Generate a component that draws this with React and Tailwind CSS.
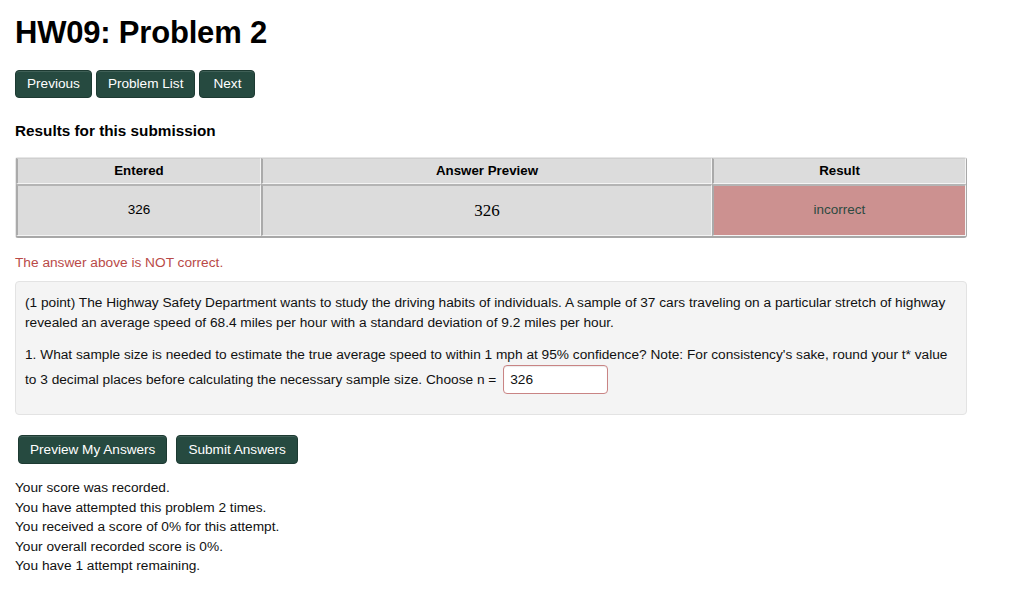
const btn =
  'h-[28px] px-[11px] rounded-[4px] bg-[#264a40] border border-[#1d3a32] text-white text-[13.6px] leading-none shadow-[inset_0_1px_0_rgba(255,255,255,0.12)]';

const cellHead =
  'border-t border-l-2 border-r border-b border-t-[#cfcfcf] border-l-[#aaaaaa] border-r-[#f4f4f4] border-b-[#f4f4f4] bg-[#dcdcdc] text-center font-bold text-[13.3px] h-[26px]';
const cellBody =
  'border-t-2 border-l-2 border-r border-b border-t-[#b4b4b4] border-l-[#aaaaaa] border-r-[#f4f4f4] border-b-[#f4f4f4] bg-[#dcdcdc] text-center text-[13.5px] h-[52px]';

export default function App() {
  return (
    <div className="min-h-[602px] bg-white text-black font-['Liberation_Sans',Arial,sans-serif] pl-[15px] pr-[57px] pt-[14px]">
      <h1 className="text-[31px] leading-[38px] font-bold tracking-[-0.2px]">HW09: Problem 2</h1>

      <div className="flex gap-[4px] mt-[18px]">
        <button className={btn}>Previous</button>
        <button className={btn}>Problem List</button>
        <button className={btn + ' px-[13px]'}>Next</button>
      </div>

      <h2 className="mt-[23px] text-[15.3px] leading-[20px] font-bold">Results for this submission</h2>

      <table className="mt-[16px] w-[952px] border-separate border-spacing-0 border border-t-[#e6e6e6] border-l-[#e6e6e6] border-r-[#a8a8a8] border-b-[#a8a8a8] rounded-[3px] border-b-2">
        <thead>
          <tr>
            <th className={cellHead + ' w-[245px]'}>Entered</th>
            <th className={cellHead + ' w-[451px]'}>Answer Preview</th>
            <th className={cellHead}>Result</th>
          </tr>
        </thead>
        <tbody>
          <tr>
            <td className={cellBody}>326</td>
            <td className={cellBody + " font-['Liberation_Serif',serif] text-[17px]"}>326</td>
            <td className="border-t-2 border-l-2 border-r border-b border-t-[#b4b4b4] border-l-[#aaaaaa] border-r-[#f4f4f4] border-b-[#f4f4f4] bg-[#cc9190] text-center text-[13.5px] text-[#2c4a41] h-[52px]">
              incorrect
            </td>
          </tr>
        </tbody>
      </table>

      <p className="mt-[15px] text-[13.7px] leading-[20px] text-[#b94a48]">The answer above is NOT correct.</p>

      <div className="mt-[8px] w-[952px] bg-[#f4f4f4] border border-[#e3e3e3] rounded-[4px] px-[9px] pt-[11px] pb-[20px] text-[13.7px] leading-[20px] text-[#111]">
        <p>
          (1 point) The Highway Safety Department wants to study the driving habits of individuals. A sample of 37 cars
          traveling on a particular stretch of highway
          <br />
          revealed an average speed of 68.4 miles per hour with a standard deviation of 9.2 miles per hour.
        </p>
        <p className="mt-[12px]">
          1. What sample size is needed to estimate the true average speed to within 1 mph at 95% confidence? Note: For
          consistency's sake, round your t* value
          <br />
          to 3 decimal places before calculating the necessary sample size. Choose n ={' '}
          <input
            defaultValue="326"
            className="align-baseline ml-[3px] w-[105px] h-[29px] px-[6px] text-[13.7px] bg-white border border-[#c98484] rounded-[4px] shadow-[inset_0_1px_1px_rgba(0,0,0,0.08)] outline-none"
          />
        </p>
      </div>

      <div className="flex gap-[9px] mt-[20px] ml-[3px]">
        <button className={btn + ' h-[29px]'}>Preview My Answers</button>
        <button className={btn + ' h-[29px]'}>Submit Answers</button>
      </div>

      <div className="mt-[14px] text-[13.7px] leading-[19.5px] text-[#111]">
        <div>Your score was recorded.</div>
        <div>You have attempted this problem 2 times.</div>
        <div>You received a score of 0% for this attempt.</div>
        <div>Your overall recorded score is 0%.</div>
        <div>You have 1 attempt remaining.</div>
      </div>
    </div>
  );
}
